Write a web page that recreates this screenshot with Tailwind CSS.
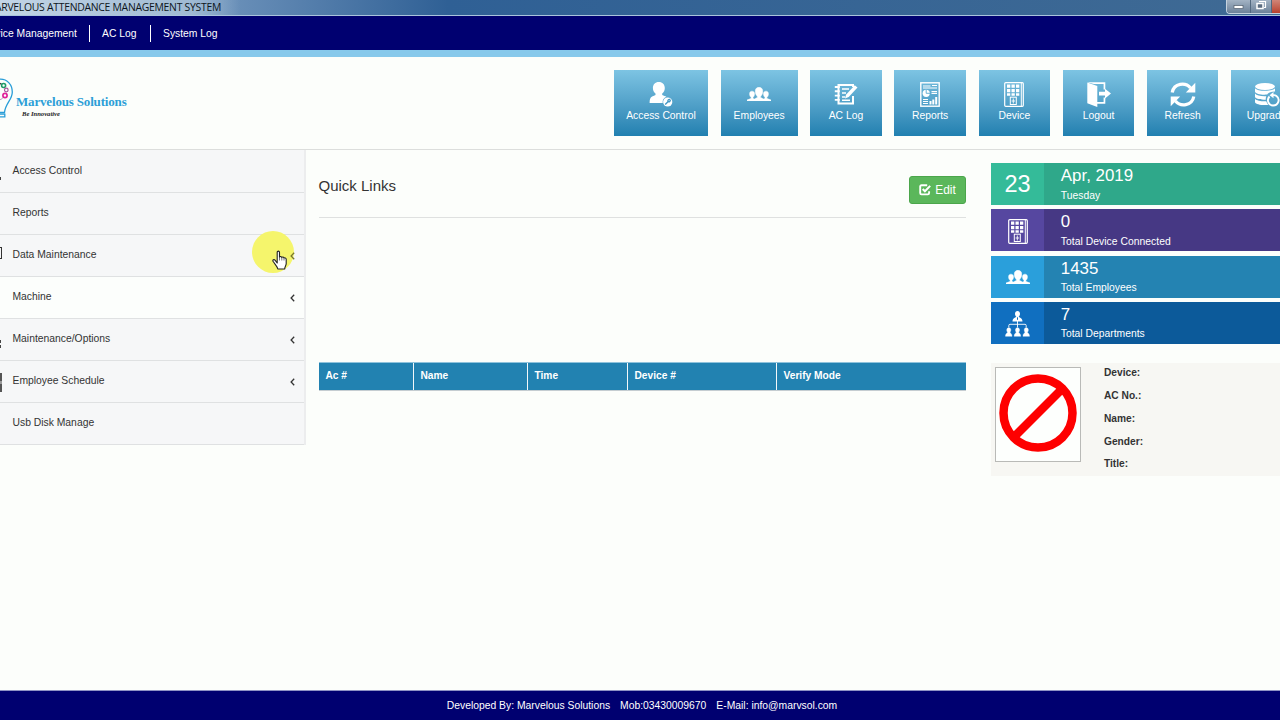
<!DOCTYPE html>
<html lang="en">
<head>
  <meta charset="UTF-8">
  <meta name="viewport" content="width=device-width, initial-scale=1">
  <title>Marvelous Attendance Management System</title>
  <script src="https://cdn.jsdelivr.net/npm/@tailwindcss/browser@4"></script>
</head>
<body class="w-[1280px] h-[720px] overflow-hidden flex flex-col bg-[#fcfefb] text-[#333] text-[10.35px] leading-[14px] font-['Liberation_Sans',Arial,sans-serif]">

  <!-- shared icons -->
  <svg class="hidden">
    <symbol id="people" viewBox="0 0 24 14">
      <path fill="currentColor" stroke="currentColor" stroke-width=".5" d="M0 14v-.9c1-.7 2.8-1 4-1.500.3-.3.3-.9 0-1.300C2.800 9.200 2.500 7.700 2.600 6.600 2.700 5 3.700 4.200 5 4.200s2.400.8 2.500 2.400c.1 1.100-.3 2.600-1.400 3.700-.2.400-.2 1 .1 1.300l1.300.4c.8-.6 1.900-.9 2.600-1.300.4-.4.4-1.100 0-1.600C8.700 7.700 8.200 5.800 8.300 4 8.400 1.500 10 .3 12 .3s3.600 1.200 3.700 3.700c.1 1.800-.4 3.700-1.800 5.100-.4.500-.4 1.200 0 1.600.7.400 1.800.7 2.600 1.300l1.300-.4c.3-.3.3-.9.100-1.300-1.100-1.100-1.500-2.600-1.400-3.700.1-1.600 1.200-2.400 2.500-2.400s2.300.8 2.400 2.400c.1 1.100-.2 2.600-1.400 3.700-.3.400-.3 1 0 1.300 1.200.5 3 .8 4 1.500v.9z"/>
    </symbol>
    <symbol id="device" viewBox="0 0 20 25">
      <rect x=".7" y=".7" width="18.600" height="23.600" rx="1" fill="none" stroke="currentColor" stroke-width="1.200"/>
      <path stroke="currentColor" stroke-width="1" d="M17.300 1v23"/>
      <g fill="currentColor">
        <path d="M3 2.500h3.300v3.300H3zM7.500 2.500h3.300v3.300H7.500zM12 2.500h3.300v3.300H12zM3 6.900h3.300v3.300H3zM7.500 6.900h3.300v3.300H7.500zM12 6.900h3.300v3.300H12zM3 11.300h3.300v2.500H3zM7.500 11.300h3.300v2.500H7.500zM12 11.300h3.300v2.500H12z"/>
      </g>
      <rect x="6.300" y="15.200" width="6" height="7.300" fill="none" stroke="currentColor" stroke-width="1"/>
      <path stroke="currentColor" stroke-width=".9" d="M9.300 16.500v5M7.600 19h3.500"/>
    </symbol>
    <symbol id="caret" viewBox="0 0 5 8">
      <path fill="none" stroke="currentColor" stroke-width="1.300" d="M4.200.8 1.100 4l3.100 3.200"/>
    </symbol>
  </svg>

  <!-- window title bar -->
  <div class="relative h-[16px] shrink-0 flex justify-between border-b border-[#a9c3dc] bg-linear-to-r from-[#a9c4de] via-[#2f6095] via-35% to-[#3f6a94] overflow-hidden">
    <div class="absolute inset-y-0 left-0 w-[240px] bg-linear-to-r from-[#c3d5e6] via-[#9fbad3] to-[#7e9fc3]/0 via-80%"></div>
    <div class="relative w-[221px] flex justify-end whitespace-nowrap text-[10.400px] leading-[15px] text-[#0d1520] font-['Open_Sans','Noto_Sans',sans-serif]"><span class="tracking-[-0.27px]">MARVELOUS ATTENDANCE MANAGEMENT SYSTEM</span></div>
    <div class="flex h-[14px] w-[54px] rounded-bl border-l border-b border-[#c5d2df] overflow-hidden">
      <div class="w-[24px] bg-linear-to-b from-[#a3b3c4] to-[#6d8299] border-r border-[#52687f] flex justify-center">
        <svg class="w-[11px] h-[14px]" viewBox="0 0 11 14"><rect x="1" y="5.500" width="9" height="3" fill="#fff" stroke="#4f5c6b" stroke-width=".7"/></svg>
      </div>
      <div class="w-[22px] bg-linear-to-b from-[#a3b3c4] to-[#6d8299] border-r border-[#52687f] flex justify-center">
        <svg class="w-[12px] h-[14px]" viewBox="0 0 12 14"><path d="M4 1.500h6.500v6H9" fill="none" stroke="#fff" stroke-width="1.200"/><rect x="2" y="3.500" width="6" height="5" fill="#5b6c80" stroke="#fff" stroke-width="1.500"/></svg>
      </div>
      <div class="w-[8px] bg-linear-to-b from-[#d08578] to-[#b8402c]"></div>
    </div>
  </div>

  <!-- top menu -->
  <nav class="h-[34px] shrink-0 flex items-center pt-px bg-[#000070] text-white whitespace-nowrap">
    <div class="w-[77px] flex justify-end"><span>Device Management</span></div>
    <div class="ml-3 w-px h-[17px] -mt-px bg-white"></div>
    <div class="ml-3 w-[35px]">AC Log</div>
    <div class="ml-[13px] w-px h-[17px] -mt-px bg-white"></div>
    <div class="ml-3">System Log</div>
  </nav>
  <div class="h-[7px] shrink-0 bg-[#87c9eb]"></div>

  <!-- logo and shortcuts -->
  <header class="h-[93px] shrink-0 flex items-start border-b border-[#dcdedc] whitespace-nowrap">
    <div class="w-[614px] shrink-0 flex pt-[20px]">
      <svg class="w-[14px] h-[42px] shrink-0" viewBox="0 0 14 42" fill="none">
        <path stroke="#2a9ed8" stroke-width="1.300" d="M0 2.200C7.500 2 12.300 7.800 12.300 15c0 8-6.800 11-7.800 20.500H0M0 37.200h4.800v2.600H0"/>
        <path stroke="#333" stroke-width="1.500" d="M0 6.500l1.500.6"/>
        <circle cx="3.600" cy="8.500" r="2" stroke="#1f9b68" stroke-width="1.600"/>
        <circle cx="6.300" cy="13" r="1.800" stroke="#a7569a" stroke-width="1.200"/>
        <circle cx="5" cy="18.500" r="2.100" stroke="#e0249a" stroke-width="1.700"/>
        <path stroke="#b7a0bd" stroke-width="1" d="M0 22.500c1.500 0 2.500-.8 2.500-2"/>
      </svg>
      <div class="pl-[2px] pt-[17px]">
        <div class="text-[13px] leading-[16px] font-bold tracking-[-0.17px] text-[#2c9fd7] font-['Liberation_Serif',serif]">Marvelous Solutions</div>
        <div class="pl-[6px] text-[6.600px] leading-[8px] font-bold italic text-[#222] font-['Liberation_Serif',serif]">Be Innovative</div>
      </div>
    </div>
    <div class="flex gap-[12.500px] pt-[13px] -ml-[.3px] text-white text-center">
      <div class="w-[94.500px] h-[66px] shrink-0 flex flex-col items-center pt-[12px] bg-linear-to-b from-[#7dc4e3] to-[#2080b0]">
        <svg class="w-[24px] h-[25px]" viewBox="0 0 24 25">
          <path fill="currentColor" d="M9.800 0c3.700 0 6 2.600 6 6 0 2.300-1 4.400-2.600 5.500v1.400c1.600.6 3.200 1.100 4.200 1.900-2.700 1-4.200 3.500-3.700 6.300H.6c0-3.500.4-5.700 2.500-6.700 1.300-.7 2.500-1 3.400-1.500v-1.400C4.900 10.400 3.900 8.300 3.900 6c0-3.400 2.200-6 5.900-6z"/>
          <circle cx="18.700" cy="20" r="4.600" fill="currentColor"/>
          <path stroke="#4598c5" stroke-width="1.400" fill="none" d="m16.200 22.500 3-3M19 19.700c-.5-1.500.5-2.600 2-2.300M19 19.700c1.500.4 2.500-.6 2.300-2"/>
        </svg>
        <span class="mt-[2px]">Access Control</span>
      </div>
      <div class="w-[77px] h-[66px] shrink-0 flex flex-col items-center pt-[17px] bg-linear-to-b from-[#7dc4e3] to-[#2080b0]">
        <svg class="w-[24px] h-[14px]"><use href="#people"/></svg>
        <span class="mt-[8px]">Employees</span>
      </div>
      <div class="w-[71.500px] h-[66px] shrink-0 flex flex-col items-center pt-[13px] bg-linear-to-b from-[#7dc4e3] to-[#2080b0]">
        <svg class="w-[24px] h-[23px]" viewBox="0 0 24 23" fill="none" stroke="currentColor">
          <path stroke-width="2" d="M19 4V2H4.500v18.500H19V13"/>
          <path stroke-width="1.900" d="M.8 4h5M.8 8.300h5M.8 12.600h5M.8 16.900h5"/>
          <path stroke-width="1.600" d="M8 6h7M8 10h4M8 14h3M8 17.300h8"/>
          <path fill="currentColor" stroke="none" d="m20.800 2.300 2.700 2.300-8.800 9.500-3.700 1.300 1-3.700z"/>
        </svg>
        <span class="mt-[3px]">AC Log</span>
      </div>
      <div class="w-[71.800px] h-[66px] shrink-0 flex flex-col items-center pt-[12px] bg-linear-to-b from-[#7dc4e3] to-[#2080b0]">
        <svg class="w-[20px] h-[25px]" viewBox="0 0 20 25" fill="none" stroke="currentColor">
          <rect x=".8" y=".8" width="18.400" height="23.400" stroke-width="1.400"/>
          <path stroke-width="1.200" d="M3 4h7.500M12 3.500h5M3 6h14M11.500 9.500H17M11.500 11.300H17M3 17.500h5M3 19.500h5M3 21.500h5"/>
          <circle cx="6.200" cy="11.300" r="3.600" fill="currentColor" stroke="none"/>
          <path stroke="#5aa9d0" stroke-width=".9" d="M6.200 7.500v3.800H10"/>
          <path stroke-width="2" d="M10.500 22.500V19M13.300 22.500V17.500M16.200 22.500V15"/>
        </svg>
        <span class="mt-[2px]">Reports</span>
      </div>
      <div class="w-[71.800px] h-[66px] shrink-0 flex flex-col items-center pt-[12px] bg-linear-to-b from-[#7dc4e3] to-[#2080b0]">
        <svg class="w-[20px] h-[25px]"><use href="#device"/></svg>
        <span class="mt-[2px]">Device</span>
      </div>
      <div class="w-[71.500px] h-[66px] shrink-0 flex flex-col items-center pt-[12px] bg-linear-to-b from-[#7dc4e3] to-[#2080b0]">
        <svg class="w-[24px] h-[25px]" viewBox="0 0 24 25" fill="currentColor">
          <path d="M.3.500 10.300 4v21L.3 21.300z"/>
          <path d="M1 .2h17.300v7.300h-1.700V1.900H7L1 .4zM10 20h6.600v-4.500h1.700v6.300H10z"/>
          <path d="M12 9.700h6V6.800l6 4.800-6 4.800v-2.900h-6z"/>
        </svg>
        <span class="mt-[2px]">Logout</span>
      </div>
      <div class="w-[71.500px] h-[66px] shrink-0 flex flex-col items-center pt-[12px] bg-linear-to-b from-[#7dc4e3] to-[#2080b0]">
        <svg class="w-[26px] h-[25px]" viewBox="0 0 26 25">
          <path fill="none" stroke="currentColor" stroke-width="3.200" d="M2.200 10.500C4 1 15.500-.2 20.500 6M23.800 14.500C22 24 10.500 25.200 5.500 19"/>
          <path fill="currentColor" d="M25.300.8v9.700h-9.500zM.7 24.200v-9.700h9.500z"/>
        </svg>
        <span class="mt-[2px]">Refresh</span>
      </div>
      <div class="w-[71.500px] h-[66px] shrink-0 flex flex-col items-center pt-[13px] bg-linear-to-b from-[#7dc4e3] to-[#2080b0]">
        <svg class="w-[26px] h-[24px]" viewBox="0 0 26 24">
          <g fill="currentColor">
            <ellipse cx="11" cy="3.500" rx="10" ry="3.500"/>
            <path d="M1 5.300c2 3.400 18 3.400 20 0v3.200c-4 0-6.500 1-7.800 3C7.500 12 2 11 1 8.700zM1 10.500c1.500 2 6 3 11.300 2.700-.5 1.200-.7 2.500-.5 3.600C6.500 16.800 2 15.800 1 14zM1 15.700c1.500 2 6.500 2.800 11.200 2.600.5 1.500 1.300 2.700 2.300 3.500C8.500 22.500 2 21.500 1 19.200z"/>
          </g>
          <path fill="none" stroke="currentColor" stroke-width="1.900" d="M15.500 13.500c-3 3-1.500 8.800 3.500 9 5.500 0 7.500-6.500 3.500-9.500-1-.8-2.500-1-3.500-.8"/>
          <path fill="currentColor" d="M19.500 8.900v6.300l-4-3z"/>
        </svg>
        <span class="mt-[2px]">Upgrade</span>
      </div>
    </div>
  </header>

  <div class="flex-1 min-h-0 flex items-start">
    <!-- sidebar -->
    <aside class="w-[306px] shrink-0 bg-[#f6f7f8] border-r-2 border-[#ecedee]">
      <div class="relative h-[43px] flex items-center pl-[12.500px] pr-[9.500px] border-b border-[#dfe1e2]">Access Control<i class="absolute left-0 top-[27px] w-px h-[3px] bg-[#444]"></i></div>
      <div class="h-[42px] flex items-center pl-[12.500px] pr-[9.500px] pb-px border-b border-[#dfe1e2]">Reports</div>
      <div class="relative h-[42px] flex items-center justify-between pl-[12.500px] pr-[9.500px] pb-px border-b border-[#dfe1e2]">Data Maintenance
        <i class="absolute -left-1 top-[12px] w-[6px] h-[12px] border border-[#333]"></i>
        <!-- click highlight and pointer -->
        <span class="absolute left-[252px] -top-[4px] size-[42px] rounded-full bg-[#f5f56c]"></span>
        <svg class="relative top-px w-[5px] h-[8px] text-[#77772c]"><use href="#caret"/></svg>
        <svg class="absolute left-[272px] top-[15px] w-[16px] h-[20px]" viewBox="0 0 16 20">
          <path fill="#fff" stroke="#222" stroke-width="1.100" stroke-linejoin="round" d="M5.200 13V2.300c0-1.600 2.300-1.600 2.300 0v5c.3-1.100 2.100-1 2.300.3.500-.9 2-.7 2.200.6.600-.7 2.200-.4 2.200 1v4.300c0 2-1.500 3-1.500 5.500H5.800C5.500 16.500 3 14.500 1 11.300c-.6-1.300 1-2.200 2-1.200z"/>
          <path stroke="#555" stroke-width=".8" d="M7.500 7v3.500M9.800 8v2.500M12 8.500v2"/>
        </svg>
      </div>
      <div class="h-[42px] flex items-center justify-between pl-[12.500px] pr-[9.500px] pb-px border-b border-[#dfe1e2] bg-[#fcfefc]">Machine
        <svg class="relative top-px w-[5px] h-[8px]"><use href="#caret"/></svg>
      </div>
      <div class="relative h-[42px] flex items-center justify-between pl-[12.500px] pr-[9.500px] pb-px border-b border-[#dfe1e2]">Maintenance/Options
        <i class="absolute left-0 top-[21px] w-px h-[8px] border-y-3 border-[#444]"></i>
        <svg class="relative top-px w-[5px] h-[8px]"><use href="#caret"/></svg>
      </div>
      <div class="relative h-[42px] flex items-center justify-between pl-[12.500px] pr-[9.500px] pb-px border-b border-[#dfe1e2]">Employee Schedule
        <i class="absolute left-0 top-[12px] w-[2px] h-[19px] border-y-8 border-[#555] bg-[#999]"></i>
        <svg class="relative top-px w-[5px] h-[8px]"><use href="#caret"/></svg>
      </div>
      <div class="h-[42px] flex items-center pl-[12.500px] pr-[9.500px] pb-px border-b border-[#dfe1e2]">Usb Disk Manage</div>
    </aside>

    <!-- main panel -->
    <main class="w-[647px] ml-[13px] shrink-0">
      <div class="h-[68px] flex items-start justify-between pt-[26px] border-b border-[#dfe1e0]">
        <h1 class="-ml-[.5px] text-[15px] leading-[20px]">Quick Links</h1>
        <button class="w-[57px] h-[28px] flex items-center justify-center gap-1 rounded-[3px] border border-[#4ba64b] bg-[#5bb75b] text-white text-[11.900px]">
          <svg class="w-[12px] h-[12px]" viewBox="0 0 12 12" fill="none" stroke="currentColor">
            <path stroke-width="1.900" d="M8.200 1.300H2.500Q1.200 1.300 1.200 2.600v6.500q0 1.300 1.300 1.300h6.300q1.300 0 1.300-1.300V7.200"/>
            <path stroke-width="2" d="m3.700 5 2.200 2.300 5.300-5.400"/>
          </svg>
          Edit
        </button>
      </div>
      <div class="mt-[144px] h-[29px] grid grid-cols-[94px_113px_99px_148px_189px] gap-px border-t border-[#8fc3dc] border-b border-b-[#c5cdd1] bg-[#f2f8fa] text-white font-bold text-[10.200px]">
        <div class="flex items-center pl-[6.500px] pb-[2px] bg-[#2282b1]">Ac #</div>
        <div class="flex items-center pl-[6.500px] pb-[2px] bg-[#2282b1]">Name</div>
        <div class="flex items-center pl-[6.500px] pb-[2px] bg-[#2282b1]">Time</div>
        <div class="flex items-center pl-[6.500px] pb-[2px] bg-[#2282b1]">Device #</div>
        <div class="flex items-center pl-[6.500px] pb-[2px] bg-[#2282b1]">Verify Mode</div>
      </div>
    </main>

    <!-- stats -->
    <section class="w-[289px] ml-[25.300px] pt-[13px] shrink-0">
      <div class="flex flex-col gap-[4.300px] text-white">
        <div class="h-[42px] flex bg-[#2fa88a]">
          <div class="w-[52.500px] flex items-center justify-center bg-[#34bb99] text-[23.500px]">23</div>
          <div class="pl-[17px] pt-[2px]"><div class="text-[16.900px] leading-[21px]">Apr, 2019</div><div class="pt-[1.500px] leading-[16px]">Tuesday</div></div>
        </div>
        <div class="h-[42px] flex bg-[#463884]">
          <div class="w-[52.500px] flex items-center justify-center bg-[#5647a0]"><svg class="w-[20px] h-[25px] mt-[2px]"><use href="#device"/></svg></div>
          <div class="pl-[17px] pt-[2px]"><div class="text-[16.900px] leading-[21px]">0</div><div class="pt-[1.500px] leading-[16px] tracking-[.03px]">Total Device Connected</div></div>
        </div>
        <div class="h-[42px] flex bg-[#2483b2]">
          <div class="w-[52.500px] flex items-center justify-center bg-[#2a9fdb]"><svg class="w-[24px] h-[14px] mt-px"><use href="#people"/></svg></div>
          <div class="pl-[17px] pt-[2px]"><div class="text-[16.900px] leading-[21px]">1435</div><div class="pt-px leading-[16px]">Total Employees</div></div>
        </div>
        <div class="h-[42px] flex bg-[#0c5a9a]">
          <div class="w-[52.500px] flex items-center justify-center bg-[#106fc0]">
            <svg class="w-[25px] h-[26px] mt-[3px]" viewBox="0 0 25 26">
              <g fill="currentColor">
                <path d="M12.500 0c1.500 0 2.500 1.200 2.500 2.800 0 1.300-.6 2.300-1.300 2.900.1.800 3.800.9 3.800 4.800h-10c0-3.900 3.700-4 3.800-4.800-.7-.6-1.300-1.600-1.300-2.900C10 1.200 11 0 12.500 0z"/>
                <path id="staff" stroke="currentColor" stroke-width=".4" d="M3.800 16.800c1.300 0 2 .9 2 2.200 0 1.100-.4 1.700-.9 2.200.2.900 2.100 1.100 2.100 4.100H.500c0-3 1.900-3.200 2.100-4.100-.5-.5-.8-1.100-.8-2.200 0-1.300.7-2.200 2-2.200z"/>
                <use href="#staff" x="8.700"/>
                <use href="#staff" x="17.500"/>
              </g>
              <path fill="none" stroke="currentColor" stroke-width=".9" d="M12.500 10v6.500M3.800 16.500v-2q0-1.200 1.200-1.200h15q1.200 0 1.200 1.200v2"/>
              <path stroke="#106fc0" stroke-width="1" d="M12.500 6.300v2.500"/>
            </svg>
          </div>
          <div class="pl-[17px] pt-[2px]"><div class="text-[16.900px] leading-[21px]">7</div><div class="pt-px leading-[16px]">Total Departments</div></div>
        </div>
      </div>
      <div class="mt-[19.100px] h-[113px] flex items-start bg-[#f7f7f3] pl-[4px] pt-[4px]">
        <div class="w-[86px] h-[95px] border border-[#b9bab7] bg-[#fdfffd] flex justify-center pt-[6px]">
          <svg class="w-[78px] h-[78px]" viewBox="0 0 78 78" fill="none" stroke="#fe0000" stroke-width="8.500">
            <circle cx="39" cy="39" r="34.500"/>
            <path d="M14.500 63.500 63.500 14.500"/>
          </svg>
        </div>
        <div class="pl-[22.700px] font-bold text-[10.200px] leading-[22.700px] -mt-[4.500px]">
          <div>Device:</div>
          <div>AC No.:</div>
          <div>Name:</div>
          <div>Gender:</div>
          <div>Title:</div>
        </div>
      </div>
    </section>
  </div>

  <footer class="h-[30px] shrink-0 flex gap-[10px] justify-center items-center border-t border-[#8f93c4] bg-[#000070] text-white whitespace-nowrap pl-[4px]">
    <span>Developed By: Marvelous Solutions</span>
    <span>Mob:03430009670</span>
    <span>E-Mail: info@marvsol.com</span>
  </footer>
</body>
</html>
